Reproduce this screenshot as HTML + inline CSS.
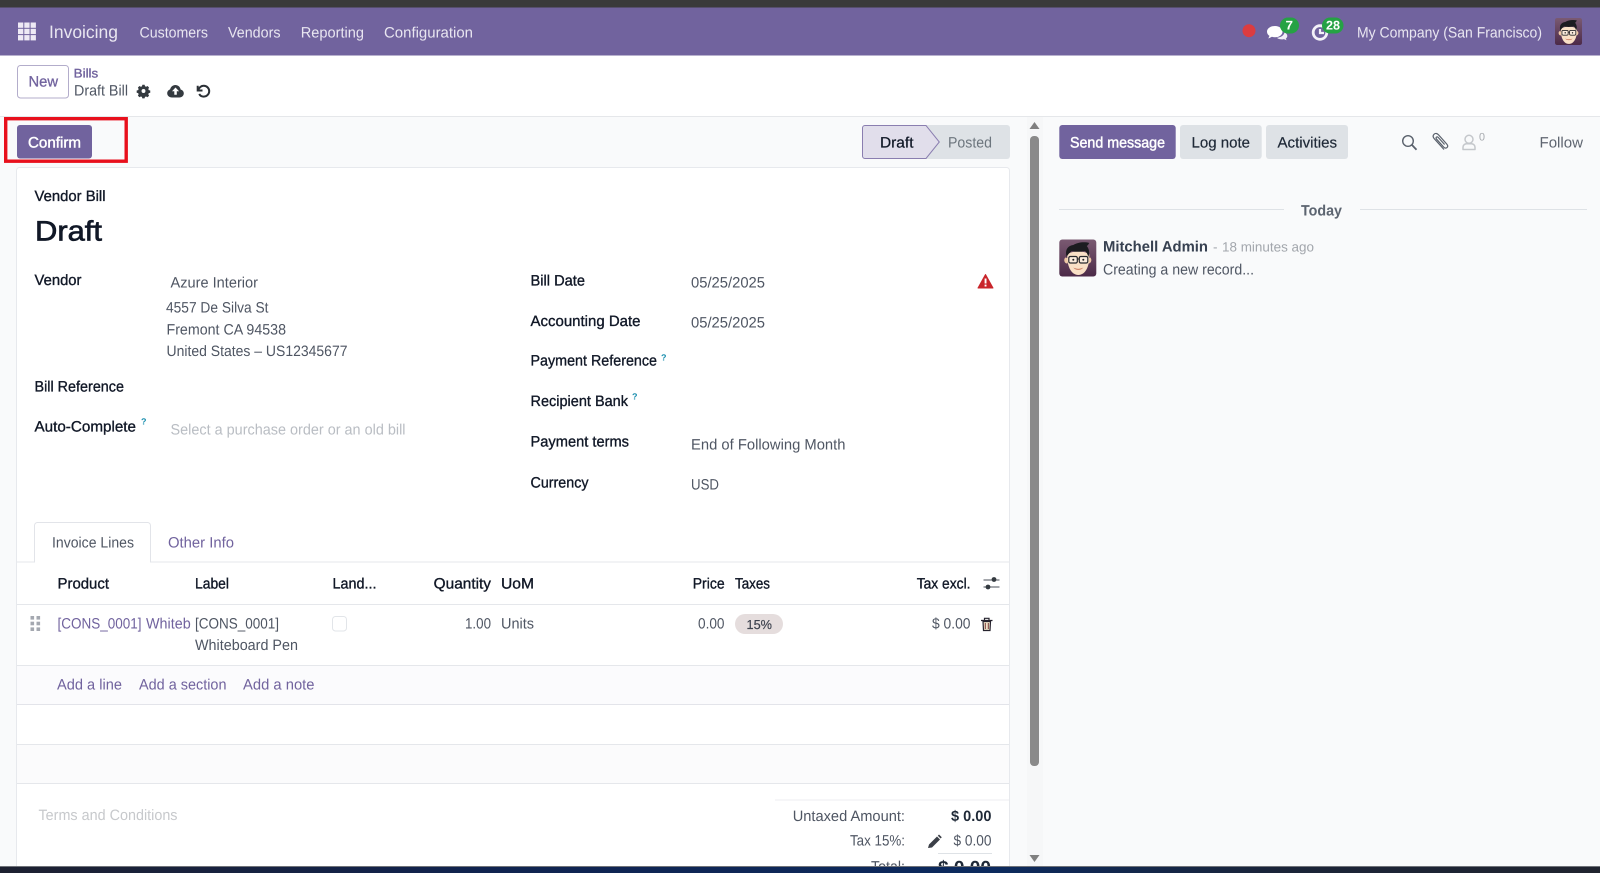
<!DOCTYPE html>
<html lang="en"><head><meta charset="utf-8"><title>Draft Bill</title>
<style>
html,body{margin:0;padding:0;width:1600px;height:873px;overflow:hidden;background:#f9fafb}
svg{display:block}
text{font-family:"Liberation Sans",sans-serif;font-size:15px;fill:#4a5160;text-rendering:geometricPrecision;transform:translateY(-.6px)}
.n{fill:#e9e6f1}
.l{fill:#111827;stroke:#111827;stroke-width:.35}
.v{fill:#4f5663}
.p{fill:#71639e}
.w{fill:#fff;stroke:#fff;stroke-width:.45}
.q{font-size:9px;fill:#1b8fae;font-weight:700}
</style></head><body>
<svg width="1600" height="873" viewBox="0 0 1600 873" xmlns="http://www.w3.org/2000/svg">
<defs>
<clipPath id="pc"><rect x="50" y="610" width="140.500" height="30"/></clipPath>
<linearGradient id="bot" x1="0" x2="1" y1="0" y2="0"><stop offset="0" stop-color="#1d2030"/><stop offset=".3" stop-color="#10234f"/><stop offset=".62" stop-color="#0c2a5e"/><stop offset=".8" stop-color="#1a2438"/><stop offset="1" stop-color="#20242f"/></linearGradient>
<linearGradient id="avb" x1="0" x2="0" y1="0" y2="1"><stop offset="0" stop-color="#7a5a72"/><stop offset="1" stop-color="#4c2a48"/></linearGradient>
<g id="av">
<rect width="37" height="37" rx="3" fill="url(#avb)"/>
<path d="M6 18c-2 2-1 6 2 6l2-5zM31 18c2 2 1 6-2 6l-2-5z" fill="#eec7a4"/>
<path d="M8 15c-.5 12 4 20.500 11 20.500S30.500 27 30 15c-4-4-18-4-22 0z" fill="#f9e0c6"/>
<path d="M7.500 18C5 10 9 6 14 5.500c4-2.500 11-3.500 16-2-1 1.500-1.500 2.500-2.500 3 2.500 3 3 7 1.500 11-.8-3-1.800-5-3.500-6-4 1-9.500 1-13 0-2 1.500-4 3.500-5.500 6.500z" fill="#1c1c20"/>
<rect x="9.500" y="17" width="8.500" height="6.500" rx="1.500" fill="#fff" fill-opacity=".4" stroke="#2a2a2e" stroke-width="1.200"/>
<rect x="20" y="17" width="8.500" height="6.500" rx="1.500" fill="#fff" fill-opacity=".4" stroke="#2a2a2e" stroke-width="1.200"/>
<path d="M18 19.500h2" stroke="#2a2a2e" stroke-width="1.100"/>
<circle cx="14" cy="20.300" r="1" fill="#222"/><circle cx="24" cy="20.300" r="1" fill="#222"/>
<path d="M14 28c3 1.800 7 1.800 10 0-2 3-8 3-10 0z" fill="#c0654a"/>
</g>
</defs>

<!-- page -->
<rect width="1600" height="873" fill="#f9fafb"/>
<rect width="1600" height="7.500" fill="#3a3a3a"/>
<rect y="7.500" width="1600" height="48" fill="#71639e"/>
<rect y="55.500" width="1600" height="60.500" fill="#fff"/>
<rect y="116" width="1600" height="1" fill="#e5e7ea"/>

<!-- nav -->
<g fill="#eeeaf5">
<rect x="18" y="22.500" width="5.300" height="5.300"/><rect x="24.300" y="22.500" width="5.300" height="5.300"/><rect x="30.600" y="22.500" width="5.300" height="5.300"/>
<rect x="18" y="28.800" width="5.300" height="5.300"/><rect x="24.300" y="28.800" width="5.300" height="5.300"/><rect x="30.600" y="28.800" width="5.300" height="5.300"/>
<rect x="18" y="35.100" width="5.300" height="5.300"/><rect x="24.300" y="35.100" width="5.300" height="5.300"/><rect x="30.600" y="35.100" width="5.300" height="5.300"/>
</g>
<text class="n" x="49" y="38.500" style="font-size:18px" textLength="69" lengthAdjust="spacingAndGlyphs">Invoicing</text>
<text class="n" x="139.500" y="38" textLength="68.500" lengthAdjust="spacingAndGlyphs">Customers</text>
<text class="n" x="228" y="38" textLength="52.500" lengthAdjust="spacingAndGlyphs">Vendors</text>
<text class="n" x="300.700" y="38" textLength="63.300" lengthAdjust="spacingAndGlyphs">Reporting</text>
<text class="n" x="384" y="38" textLength="89" lengthAdjust="spacingAndGlyphs">Configuration</text>

<circle cx="1249" cy="30.700" r="6.500" fill="#dc3c40"/>
<path d="M1275 26c-4.500 0-8 2.400-8 5.700 0 1.800 1 3.200 2.500 4.200l-1.200 2.600 3.600-1.700c1 .3 2 .4 3.100.4 4.500 0 7.500-2.500 7.500-5.500s-3-5.700-7.500-5.700z" fill="#fff"/>
<path d="M1284.500 32.500c1.800.8 2.800 2.100 2.800 3.500 0 1-.5 1.900-1.500 2.600l.8 1.700-2.700-1.200c-2.700.7-5.500 0-7-1.400 3.500-.1 7-2 7.600-5.200z" fill="#f0eef6"/>
<rect x="1280" y="17.500" width="19" height="16" rx="8" fill="#25a244"/>
<text x="1285.500" y="30" class="w" style="font-size:12.500px;font-weight:700;stroke-width:0" textLength="7.500" lengthAdjust="spacingAndGlyphs">7</text>
<circle cx="1320" cy="32.500" r="6.800" fill="none" stroke="#f3f1f8" stroke-width="2.800"/>
<path d="M1320 29v4h4" fill="none" stroke="#f3f1f8" stroke-width="2.200"/>
<rect x="1322" y="17.500" width="21.500" height="16" rx="8" fill="#25a244"/>
<text x="1326" y="30" class="w" style="font-size:12.500px;font-weight:700;stroke-width:0" textLength="14" lengthAdjust="spacingAndGlyphs">28</text>
<text class="n" x="1357" y="38" textLength="185" lengthAdjust="spacingAndGlyphs">My Company (San Francisco)</text>
<use href="#av" transform="translate(1555 18) scale(.73)"/>

<!-- breadcrumb -->
<rect x="17.500" y="65.500" width="51" height="32.500" rx="3" fill="#fff" stroke="#b3adcb"/>
<text class="p" x="28.500" y="87" stroke="#71639e" stroke-width=".3" textLength="29.500" lengthAdjust="spacingAndGlyphs">New</text>
<text class="p" x="73.700" y="78" style="font-size:12.500px" stroke="#71639e" stroke-width=".35" textLength="24.500" lengthAdjust="spacingAndGlyphs">Bills</text>
<text class="v" x="74" y="96" textLength="54" lengthAdjust="spacingAndGlyphs">Draft Bill</text>
<g transform="translate(143.500 91) scale(.75) translate(0 -1.500)" fill="#343a40">
<path d="M-1.500-6.800h3l.5 2 1.500.7 1.900-1 2 2.100-1 1.800.6 1.500 2 .6v3l-2 .5-.6 1.500 1 1.900-2.100 2-1.800-1-1.500.6-.6 2h-3l-.5-2-1.500-.6-1.800 1-2.100-2.100 1-1.800-.6-1.500-2-.6v-3l2-.5.6-1.500-1-1.800 2.100-2.100 1.800 1 1.500-.6z"/>
<circle cy="1.500" r="2.600" fill="#fff"/>
</g>
<path d="M172 97.500c-2.800 0-4.800-1.800-4.800-4.200 0-1.900 1.200-3.300 2.900-3.900.6-2.600 2.700-4.400 5.200-4.400 2.700 0 4.900 1.900 5.300 4.500 1.800.4 3.200 1.900 3.200 3.800 0 2.300-1.800 4.200-4.500 4.200z" fill="#343a40"/>
<path d="M175.500 87.500l-3.500 3.700h2.300v3.500h2.500v-3.500h2.300z" fill="#fff"/>
<path d="M197.700 85.700v4.800h4.800" fill="none" stroke="#2b3036" stroke-width="2"/>
<path d="M198.300 90c1.100-2.700 3.200-4.200 5.500-4.200 3 0 5.400 2.400 5.400 5.300 0 3-2.400 5.500-5.400 5.500-2 0-3.700-1-4.600-2.600" fill="none" stroke="#2b3036" stroke-width="2"/>

<!-- confirm -->
<rect x="17" y="125" width="75" height="33.500" rx="3" fill="#71639e"/>
<text class="w" x="28" y="148" textLength="53" lengthAdjust="spacingAndGlyphs">Confirm</text>
<rect x="5.700" y="118.700" width="120.500" height="42.500" fill="none" stroke="#e8101c" stroke-width="3.400"/>

<!-- statusbar -->
<rect x="862" y="125" width="148" height="34" rx="3" fill="#dee2e6"/>
<path d="M926 125.500H865a2.500 2.500 0 0 0-2.500 2.500v28a2.500 2.500 0 0 0 2.500 2.500h61L939.300 142z" fill="#e1deeb" stroke="#8a7eb0"/>
<text x="880" y="148.300" style="fill:#111827" stroke="#111827" stroke-width=".25" textLength="33.500" lengthAdjust="spacingAndGlyphs">Draft</text>
<text x="948" y="148.300" style="fill:#6c757d" textLength="44" lengthAdjust="spacingAndGlyphs">Posted</text>

<!-- scrollbar -->
<rect x="1027" y="117" width="16" height="750" fill="#f6f7f8"/>
<path d="M1034.500 122l5 7h-10z" fill="#808080"/>
<rect x="1030" y="136" width="9" height="630" rx="4" fill="#8a8a8a"/>
<path d="M1034.500 862l-5-7h10z" fill="#808080"/>

<!-- card -->
<rect x="16.500" y="167.500" width="993" height="720" rx="3" fill="#fff" stroke="#e7e9ed"/>
<text class="l" x="34.500" y="201.700" textLength="71" lengthAdjust="spacingAndGlyphs">Vendor Bill</text>
<text x="35" y="241" style="font-size:28px;fill:#111827" stroke="#111827" stroke-width=".7" textLength="67" lengthAdjust="spacingAndGlyphs">Draft</text>

<text class="l" x="34.500" y="285.700" textLength="47" lengthAdjust="spacingAndGlyphs">Vendor</text>
<text class="v" x="170.500" y="288.300" textLength="87.500" lengthAdjust="spacingAndGlyphs">Azure Interior</text>
<text class="v" x="166" y="313.300" textLength="102.500" lengthAdjust="spacingAndGlyphs">4557 De Silva St</text>
<text class="v" x="166.500" y="335" textLength="119.500" lengthAdjust="spacingAndGlyphs">Fremont CA 94538</text>
<text class="v" x="166.500" y="356.700" textLength="181" lengthAdjust="spacingAndGlyphs">United States – US12345677</text>
<text class="l" x="34.500" y="392.300" textLength="89.500" lengthAdjust="spacingAndGlyphs">Bill Reference</text>
<text class="l" x="34.500" y="432.300" textLength="101.500" lengthAdjust="spacingAndGlyphs">Auto-Complete</text>
<text class="q" x="141" y="425">?</text>
<text x="170.500" y="435" style="fill:#b9bdc3" textLength="235" lengthAdjust="spacingAndGlyphs">Select a purchase order or an old bill</text>

<text class="l" x="530.500" y="286" textLength="54.500" lengthAdjust="spacingAndGlyphs">Bill Date</text>
<text class="v" x="691" y="288.300" textLength="74" lengthAdjust="spacingAndGlyphs">05/25/2025</text>
<path d="M985.500 274.500l7.500 13.500h-15z" fill="#c9252b" stroke="#c9252b" stroke-linejoin="round"/>
<rect x="984.600" y="278.500" width="1.900" height="5" fill="#fff"/><rect x="984.600" y="284.600" width="1.900" height="1.900" fill="#fff"/>
<text class="l" x="530.500" y="326.700" textLength="110" lengthAdjust="spacingAndGlyphs">Accounting Date</text>
<text class="v" x="691" y="328.300" textLength="74" lengthAdjust="spacingAndGlyphs">05/25/2025</text>
<text class="l" x="530.500" y="366" textLength="126.500" lengthAdjust="spacingAndGlyphs">Payment Reference</text>
<text class="q" x="661" y="361">?</text>
<text class="l" x="530.500" y="406.700" textLength="97.500" lengthAdjust="spacingAndGlyphs">Recipient Bank</text>
<text class="q" x="632" y="400">?</text>
<text class="l" x="530.500" y="447.300" textLength="98.500" lengthAdjust="spacingAndGlyphs">Payment terms</text>
<text class="v" x="691" y="450" textLength="154.500" lengthAdjust="spacingAndGlyphs">End of Following Month</text>
<text class="l" x="530.500" y="488.300" textLength="58" lengthAdjust="spacingAndGlyphs">Currency</text>
<text class="v" x="691" y="490" textLength="28" lengthAdjust="spacingAndGlyphs">USD</text>

<!-- tabs -->
<rect x="17" y="561.500" width="992" height="1" fill="#e5e7eb"/>
<path d="M34.500 562v-36.500a3 3 0 0 1 3-3h110a3 3 0 0 1 3 3V562z" fill="#fff" stroke="#e2e4e9"/>
<rect x="35" y="561" width="115" height="2" fill="#fff"/>
<text class="v" x="52" y="548.300" textLength="82" lengthAdjust="spacingAndGlyphs">Invoice Lines</text>
<text class="p" x="168" y="548.300" textLength="66" lengthAdjust="spacingAndGlyphs">Other Info</text>

<!-- table -->
<g>
<text class="l" x="57.500" y="589" textLength="51.500" lengthAdjust="spacingAndGlyphs">Product</text>
<text class="l" x="195" y="589" textLength="34" lengthAdjust="spacingAndGlyphs">Label</text>
<text class="l" x="332.500" y="589" textLength="44" lengthAdjust="spacingAndGlyphs">Land...</text>
<text class="l" x="433.700" y="589" textLength="57.300" lengthAdjust="spacingAndGlyphs">Quantity</text>
<text class="l" x="501" y="589" textLength="33" lengthAdjust="spacingAndGlyphs">UoM</text>
<text class="l" x="692.700" y="589" textLength="32" lengthAdjust="spacingAndGlyphs">Price</text>
<text class="l" x="735" y="589" textLength="35" lengthAdjust="spacingAndGlyphs">Taxes</text>
<text class="l" x="916.700" y="589" textLength="53.800" lengthAdjust="spacingAndGlyphs">Tax excl.</text>
</g>
<g stroke="#4a4f58" stroke-width="1"><path d="M983.500 580h16M983.500 587h16"/></g>
<circle cx="994" cy="579.500" r="2.400" fill="#343a40"/><circle cx="988" cy="587" r="2.400" fill="#343a40"/>
<rect x="17" y="604" width="992" height="1" fill="#e5e7eb"/>
<g fill="#a4a8b0">
<rect x="30.500" y="616" width="3.600" height="3.600"/><rect x="36.500" y="616" width="3.600" height="3.600"/>
<rect x="30.500" y="621.700" width="3.600" height="3.600"/><rect x="36.500" y="621.700" width="3.600" height="3.600"/>
<rect x="30.500" y="627.400" width="3.600" height="3.600"/><rect x="36.500" y="627.400" width="3.600" height="3.600"/>
</g>
<g clip-path="url(#pc)"><text class="p" x="57.500" y="629" textLength="84" lengthAdjust="spacingAndGlyphs">[CONS_0001]</text><text class="p" x="146" y="629" textLength="103" lengthAdjust="spacingAndGlyphs">Whiteboard Pen</text></g>
<text class="v" x="195" y="629" textLength="84" lengthAdjust="spacingAndGlyphs">[CONS_0001]</text>
<text class="v" x="195" y="650.500" textLength="103" lengthAdjust="spacingAndGlyphs">Whiteboard Pen</text>
<rect x="332.500" y="616.500" width="14" height="14.500" rx="3" fill="#fff" stroke="#e2e5e9"/>
<text class="v" x="465" y="629" textLength="26" lengthAdjust="spacingAndGlyphs">1.00</text>
<text class="v" x="501" y="629" textLength="33" lengthAdjust="spacingAndGlyphs">Units</text>
<text class="v" x="698" y="629" textLength="26.500" lengthAdjust="spacingAndGlyphs">0.00</text>
<rect x="735" y="614" width="48" height="20" rx="10" fill="#e5dddd"/>
<text x="746.500" y="629.800" style="font-size:13px;fill:#3f4450" stroke="#3f4450" stroke-width=".2" textLength="25.500" lengthAdjust="spacingAndGlyphs">15%</text>
<text class="v" x="932" y="629" textLength="38.500" lengthAdjust="spacingAndGlyphs">$ 0.00</text>
<path d="M983 621.500h7.500l-.5 9h-6.500z" fill="#efe3c8" stroke="#26232e" stroke-width="1.200"/>
<path d="M981 620.500h11.500M984.500 620v-1.700h4.500v1.700" fill="none" stroke="#26232e" stroke-width="1.200"/>
<path d="M985.300 623v6M988.300 623v6" stroke="#7a3b3b" stroke-width="1"/>

<rect x="17" y="665" width="992" height="39" fill="#fbfbfd"/>
<rect x="17" y="665" width="992" height="1" fill="#e5e7eb"/>
<rect x="17" y="704" width="992" height="1" fill="#e3e4ea"/>
<text class="p" x="57" y="690" textLength="65" lengthAdjust="spacingAndGlyphs">Add a line</text>
<text class="p" x="139" y="690" textLength="87.500" lengthAdjust="spacingAndGlyphs">Add a section</text>
<text class="p" x="243" y="690" textLength="71.500" lengthAdjust="spacingAndGlyphs">Add a note</text>
<rect x="17" y="744" width="992" height="39" fill="#fbfbfc"/>
<rect x="17" y="744" width="992" height="1" fill="#e5e7eb"/>
<rect x="17" y="783" width="992" height="1" fill="#e5e7eb"/>
<text x="38.500" y="820.700" style="fill:#c7c9cc" textLength="139" lengthAdjust="spacingAndGlyphs">Terms and Conditions</text>

<!-- totals -->
<rect x="775" y="799.500" width="234" height="1" fill="#eceef0"/>
<text class="v" x="792.700" y="821.700" textLength="112.300" lengthAdjust="spacingAndGlyphs">Untaxed Amount:</text>
<text x="951" y="821.700" style="fill:#1f2937;font-weight:700" textLength="40.500" lengthAdjust="spacingAndGlyphs">$ 0.00</text>
<text class="v" x="850" y="846" textLength="55" lengthAdjust="spacingAndGlyphs">Tax 15%:</text>
<g transform="translate(0 3)"><path d="M928 845l1-3.500 8-8 3 3-8 8z" fill="#3b3f47"/><path d="M937.800 832.700l1.200-1.200 2.800 2.800-1.200 1.200z" fill="#3b3f47"/></g>
<text class="v" x="953.500" y="846" textLength="38" lengthAdjust="spacingAndGlyphs">$ 0.00</text>
<rect x="938" y="853" width="54" height="1" fill="#dee2e6"/>
<text class="v" x="871" y="872" textLength="34" lengthAdjust="spacingAndGlyphs">Total:</text>
<text x="938" y="874.500" style="font-size:19px;fill:#1f2937;font-weight:700" textLength="53" lengthAdjust="spacingAndGlyphs">$ 0.00</text>

<!-- chatter -->
<rect x="1059.300" y="125" width="116.400" height="34" rx="3" fill="#71639e"/>
<text class="w" x="1070" y="148" textLength="95" lengthAdjust="spacingAndGlyphs">Send message</text>
<rect x="1180" y="125" width="81.700" height="34" rx="3" fill="#dee2e6"/>
<text x="1191.500" y="148" style="fill:#1f2937" stroke="#1f2937" stroke-width=".2" textLength="58.500" lengthAdjust="spacingAndGlyphs">Log note</text>
<rect x="1266" y="125" width="82" height="34" rx="3" fill="#dee2e6"/>
<text x="1277.500" y="148" style="fill:#1f2937" stroke="#1f2937" stroke-width=".2" textLength="59.500" lengthAdjust="spacingAndGlyphs">Activities</text>

<circle cx="1408" cy="141" r="5.300" fill="none" stroke="#5a616c" stroke-width="1.400"/>
<path d="M1412 145l4.500 4.700" stroke="#5a616c" stroke-width="1.800"/>
<g transform="translate(-3.500 .5)"><path d="M1447.500 149l-9.500-10.500c-1.800-2-1.600-3.700-.4-4.800 1.300-1.200 3-1 4.600.8l8 9c1.300 1.500 1.200 2.800.3 3.600-.9.800-2.200.6-3.400-.6l-7-7.800c-.7-.8-.7-1.500-.2-2 .6-.5 1.300-.4 2 .4l6.200 6.900" fill="none" stroke="#5a616c" stroke-width="1.200"/></g>
<g transform="translate(1 0)"><circle cx="1468" cy="139.300" r="4" fill="none" stroke="#c4c7cb" stroke-width="1.500"/>
<path d="M1462 149.500v-2.300c0-2 1.800-3.500 3.500-3.500h5c1.700 0 3.500 1.500 3.500 3.500v2.300z" fill="none" stroke="#c4c7cb" stroke-width="1.500" stroke-linejoin="round"/></g>
<text x="1479" y="141" style="font-size:11px;fill:#a8abb0" textLength="6" lengthAdjust="spacingAndGlyphs">0</text>
<text x="1539.500" y="148" style="fill:#5f6570" textLength="43.500" lengthAdjust="spacingAndGlyphs">Follow</text>

<rect x="1059" y="209" width="225" height="1" fill="#dee2e6"/>
<rect x="1360" y="209" width="227" height="1" fill="#dee2e6"/>
<text x="1301" y="216" style="fill:#5c6470;font-weight:700" textLength="41" lengthAdjust="spacingAndGlyphs">Today</text>
<use href="#av" transform="translate(1059.300 239.500)"/>
<text x="1103" y="252.300" style="fill:#374151;font-weight:700" textLength="105" lengthAdjust="spacingAndGlyphs">Mitchell Admin</text>
<text x="1213" y="252.300" style="font-size:13.500px;fill:#a2a6ac">-</text>
<text x="1222" y="252.300" style="font-size:13.500px;fill:#a2a6ac" textLength="92" lengthAdjust="spacingAndGlyphs">18 minutes ago</text>
<text class="v" x="1103" y="275" textLength="151" lengthAdjust="spacingAndGlyphs">Creating a new record...</text>

<!-- bottom bar -->
<rect y="866" width="1600" height="1" fill="#6f7278"/>
<rect y="867" width="1600" height="6" fill="url(#bot)"/>
</svg>
</body></html>
